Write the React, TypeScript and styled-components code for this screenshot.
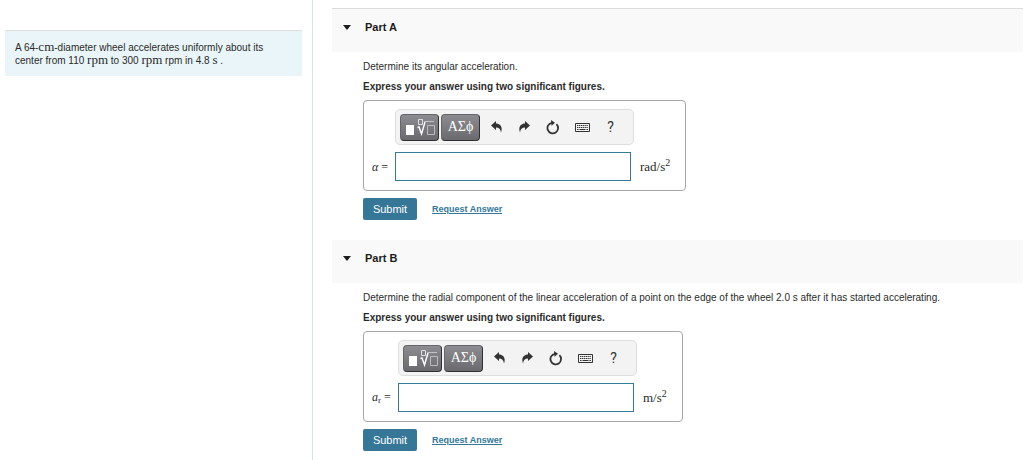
import React from "react";
import styled, { createGlobalStyle } from "styled-components";

const sans = '"Liberation Sans", Arial, sans-serif';
const serif = '"Liberation Serif", "Times New Roman", serif';

const GlobalStyle = createGlobalStyle`
  *, *::before, *::after { box-sizing: border-box; }
  body {
    margin: 0;
    background: #fff;
    color: #2b2b2b;
    font: 10px/12px ${sans};
    overflow: hidden;
  }
`;

const Page = styled.div`
  display: grid;
  grid-template-columns: 313px minmax(0, 1fr);
  min-height: 100vh;
`;

const Sidebar = styled.aside`
  padding: 30px 10px 0 5px;
  border-right: 1px solid #d9e1ea;
`;

const Problem = styled.p`
  margin: 0;
  padding: 10px 32px 9px 10px;
  border-top: 1px solid #dedede;
  background: #e9f5f8;
  line-height: 13px;
`;

const Unit = styled.span`
  font-family: ${serif};
  font-size: 13px;
  line-height: 0;
`;

const Main = styled.main`
  padding: 8px 1px 0 19px;
`;

const Part = styled.section`
  margin-bottom: 20px;
`;

const PartHeader = styled.header<{ $first?: boolean }>`
  display: flex;
  align-items: flex-start;
  height: ${(p) => (p.$first ? 44 : 43)}px;
  padding: 12px 11px 0;
  border-top: ${(p) => (p.$first ? "1px solid #dcdcdc" : "none")};
  background: #f9f9f9;
`;

const Toggle = styled.button`
  display: flex;
  gap: 14px;
  align-items: center;
  padding: 0;
  border: 0;
  background: none;
  color: #1c1c1c;
  font: bold 11px/12px ${sans};
`;

const PartTitle = styled.h2`
  margin: 0;
  font: inherit;
`;

const PartBody = styled.div`
  padding: 9px 0 0 31px;
`;

const Line = styled.p<{ $strong?: boolean }>`
  margin: 0 0 ${(p) => (p.$strong ? 7 : 8)}px;
  font-weight: ${(p) => (p.$strong ? "bold" : "normal")};
`;

const AnswerBox = styled.div<{ $labelWidth: number }>`
  display: inline-grid;
  grid-template-columns: ${(p) => p.$labelWidth}px 236px auto;
  row-gap: 7px;
  align-items: center;
  padding: 8px 15px 9px 8px;
  border: 1px solid #a6a6a6;
  border-radius: 4px;
  vertical-align: top;
`;

const Toolbar = styled.div`
  grid-column: 2 / 4;
  display: flex;
  align-items: center;
  justify-self: start;
  width: 239px;
  height: 36px;
  padding: 0 8px 0 4px;
  border: 1px solid #dedede;
  border-radius: 5px;
  background: #f3f3f3;
`;

const PaletteButton = styled.button`
  display: flex;
  align-items: center;
  justify-content: center;
  width: 39px;
  height: 27px;
  margin-right: 2px;
  padding: 0;
  border: 1px solid #66666a;
  border-right-color: #303034;
  border-bottom-color: #303034;
  border-radius: 4px;
  background: linear-gradient(#8d8d91, #6a6a6e);
  color: #fff;
  font: 14px/16px ${serif};
`;

const ToolButton = styled.button`
  display: flex;
  flex: 1 1 0;
  align-items: center;
  justify-content: center;
  height: 24px;
  padding: 0;
  border: 0;
  background: none;
  color: #333;
  font: 14px/16px Roboto, ${sans};
`;

const Label = styled.label`
  font: 12px/14px ${serif};
  white-space: nowrap;

  sub {
    font-size: 9px;
    line-height: 1;
    vertical-align: -2px;
  }
`;

const AnswerInput = styled.input`
  width: 100%;
  height: 29px;
  padding: 0 6px;
  border: 1px solid #367b98;
  border-radius: 0;
  background: #fff;
  font: 12px/14px ${sans};
`;

const Units = styled.span`
  padding-left: 9px;
  font: 13px/14px ${serif};

  sup {
    font-size: 10px;
    line-height: 0;
    vertical-align: 5px;
  }
`;

const Actions = styled.div`
  display: flex;
  gap: 15px;
  align-items: center;
  margin-top: 7px;
`;

const Submit = styled.button`
  width: 54px;
  height: 22px;
  padding: 0;
  border: 0;
  border-radius: 2px;
  background: #367798;
  color: #fff;
  font: 11px/14px ${sans};
`;

const RequestLink = styled.a`
  color: #367798;
  font-size: 9px;
  font-weight: bold;
  text-decoration: underline;
`;

const Caret = () => (
  <svg width="8" height="5" viewBox="0 0 8 5" aria-hidden="true">
    <path d="M0 0h8L4 5z" fill="#1c1c1c" />
  </svg>
);

const TemplateIcon = () => (
  <svg width="30" height="19" viewBox="0 0 30 19" fill="none" aria-hidden="true">
    <path d="M1 7h8v10H1z" fill="#fff" />
    <path d="M13.5 1.5h4v5h-4z" stroke="#e0e0e0" />
    <path d="M12.5 9.5l1.5-.5 2.5 7L20 4" stroke="#fff" strokeWidth="1.4" />
    <path d="M19.5 3.5H29" stroke="#c4c4c8" />
    <path d="M22.5 7.5h7v9h-7z" stroke="#bcbcc0" />
  </svg>
);

const UndoIcon = () => (
  <svg width="11" height="12" viewBox="0 0 11 12" aria-hidden="true">
    <path d="M0 4.500L5 0v2.500C9.300 2.600 12 6 10 11.500 9.600 8 8 6.700 5 6.600V9z" fill="currentColor" />
  </svg>
);

const RedoIcon = () => (
  <svg width="11" height="12" viewBox="0 0 11 12" aria-hidden="true">
    <path d="M11 4.500L6 0v2.500C1.700 2.600-1 6 1 11.500 1.400 8 3 6.700 6 6.600V9z" fill="currentColor" />
  </svg>
);

const ResetIcon = () => (
  <svg width="14" height="15" viewBox="0 0 14 15" fill="none" aria-hidden="true">
    <path d="M10.400 4.200A5.300 5.300 0 1 1 6 2.800" stroke="currentColor" strokeWidth="1.800" />
    <path d="M5 0L9 2.800 5.500 5.800z" fill="currentColor" />
  </svg>
);

const KeyboardIcon = () => (
  <svg width="15" height="9" viewBox="0 0 15 9" fill="none" aria-hidden="true">
    <path d="M.5.5h14v8H.5z" stroke="currentColor" />
    <path d="M2 2.500h11M2 4.500h11" stroke="currentColor" strokeDasharray="1.300 .6" />
    <path d="M2 6.500h1.500M4.500 6.500h6M11.500 6.500H13" stroke="currentColor" />
  </svg>
);

type AnswerProps = {
  id: string;
  labelWidth: number;
  label: React.ReactNode;
  units: string;
};

const Answer = ({ id, labelWidth, label, units }: AnswerProps) => (
  <>
    <AnswerBox $labelWidth={labelWidth}>
      <Toolbar role="toolbar" aria-label="Math tools">
        <PaletteButton type="button" aria-label="Templates">
          <TemplateIcon />
        </PaletteButton>
        <PaletteButton type="button">ΑΣϕ</PaletteButton>
        <ToolButton type="button" aria-label="Undo"><UndoIcon /></ToolButton>
        <ToolButton type="button" aria-label="Redo"><RedoIcon /></ToolButton>
        <ToolButton type="button" aria-label="Reset"><ResetIcon /></ToolButton>
        <ToolButton type="button" aria-label="Keyboard shortcuts"><KeyboardIcon /></ToolButton>
        <ToolButton type="button">?</ToolButton>
      </Toolbar>
      <Label htmlFor={id}>{label} =</Label>
      <AnswerInput id={id} type="text" />
      <Units>{units}<sup>2</sup></Units>
    </AnswerBox>
    <Actions>
      <Submit type="button">Submit</Submit>
      <RequestLink href="#">Request Answer</RequestLink>
    </Actions>
  </>
);

export default function App() {
  return (
    <>
      <GlobalStyle />
      <Page>
        <Sidebar>
          <Problem>
            A 64-<Unit>cm</Unit>-diameter wheel accelerates uniformly about its center from
            110 <Unit>rpm</Unit> to 300 <Unit>rpm</Unit> rpm in 4.8 <Unit>s</Unit> .
          </Problem>
        </Sidebar>
        <Main>
          <Part>
            <PartHeader $first>
              <Toggle type="button" aria-expanded="true">
                <Caret />
                <PartTitle>Part A</PartTitle>
              </Toggle>
            </PartHeader>
            <PartBody>
              <Line>Determine its angular acceleration.</Line>
              <Line $strong>Express your answer using two significant figures.</Line>
              <Answer id="alpha" labelWidth={23} label={<i>α</i>} units="rad/s" />
            </PartBody>
          </Part>
          <Part>
            <PartHeader>
              <Toggle type="button" aria-expanded="true">
                <Caret />
                <PartTitle>Part B</PartTitle>
              </Toggle>
            </PartHeader>
            <PartBody>
              <Line>
                Determine the radial component of the linear acceleration of a point on the edge
                of the wheel 2.0 s after it has started accelerating.
              </Line>
              <Line $strong>Express your answer using two significant figures.</Line>
              <Answer id="radial" labelWidth={26} label={<><i>a</i><sub>r</sub></>} units="m/s" />
            </PartBody>
          </Part>
        </Main>
      </Page>
    </>
  );
}
